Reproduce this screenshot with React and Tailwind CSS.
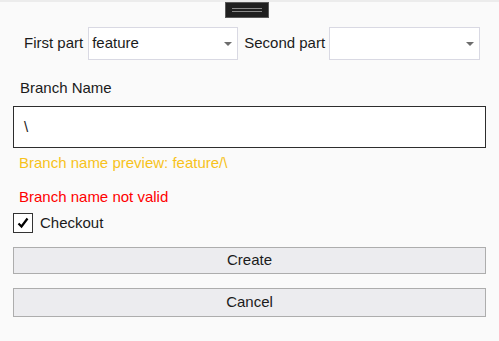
export default function App() {
  const font = { fontFamily: '"Liberation Sans", Arial, sans-serif' };
  const Arrow = () => (
    <svg width="8" height="4" viewBox="0 0 8 4" className="shrink-0">
      <path d="M0 0 L8 0 L4 4 Z" fill="#6d6d6d" />
    </svg>
  );
  return (
    <div
      className="relative w-[499px] h-[341px] bg-[#fafafa] border-t-2 border-[#ececec] text-[15px] text-[#1b1b1b] overflow-hidden"
      style={font}
    >
      <div className="absolute left-[225px] top-0 w-[44px] h-[16px] bg-[#1f1f1f] border border-[#5a5a5a] flex flex-col justify-center items-center gap-[2px]">
        <div className="w-[30px] h-[1px] bg-[#8a8a8a]" />
        <div className="w-[30px] h-[1px] bg-[#8a8a8a]" />
      </div>

      <div className="flex items-center mt-[25px] h-[33px] pl-[24px]">
        <span className="mr-[5px]">First part</span>
        <div className="w-[150px] h-[33px] bg-white border border-[#d9d9e3] flex items-center justify-between pl-[3px] pr-[5px]">
          <span>feature</span>
          <Arrow />
        </div>
        <span className="ml-[6px] mr-[4px]">Second part</span>
        <div className="w-[151px] h-[33px] bg-white border border-[#d9d9e3] flex items-center justify-end pr-[5px]">
          <Arrow />
        </div>
      </div>

      <div className="mt-[18px] h-[20px] leading-[20px] pl-[20px]">Branch Name</div>

      <div className="mt-[8px] mx-[13px] h-[42px] bg-white border border-[#2d2d2d] flex items-center pl-[10px]">
        <span>\</span>
      </div>

      <div className="mt-[5px] h-[20px] leading-[20px] pl-[19px] text-[#f7c21b]">
        Branch name preview: feature/\
      </div>

      <div className="mt-[14px] h-[20px] leading-[20px] pl-[19px] text-[#ff0000]">
        Branch name not valid
      </div>

      <div className="mt-[6px] flex items-center pl-[13px] h-[20px]">
        <div className="w-[20px] h-[20px] border border-[#333] bg-white flex items-center justify-center">
          <svg width="12" height="12" viewBox="0 0 12 12">
            <path d="M1.5 6.5 L4.5 9.5 L10.5 1.5" fill="none" stroke="#000" strokeWidth="2.2" />
          </svg>
        </div>
        <span className="ml-[7px]">Checkout</span>
      </div>

      <div className="mt-[14px] mx-[13px] h-[27px] bg-[#ececef] border border-[#adadad] flex items-center justify-center">
        Create
      </div>

      <div className="mt-[14px] mx-[13px] h-[29px] bg-[#ececef] border border-[#adadad] flex items-center justify-center">
        Cancel
      </div>
    </div>
  );
}
